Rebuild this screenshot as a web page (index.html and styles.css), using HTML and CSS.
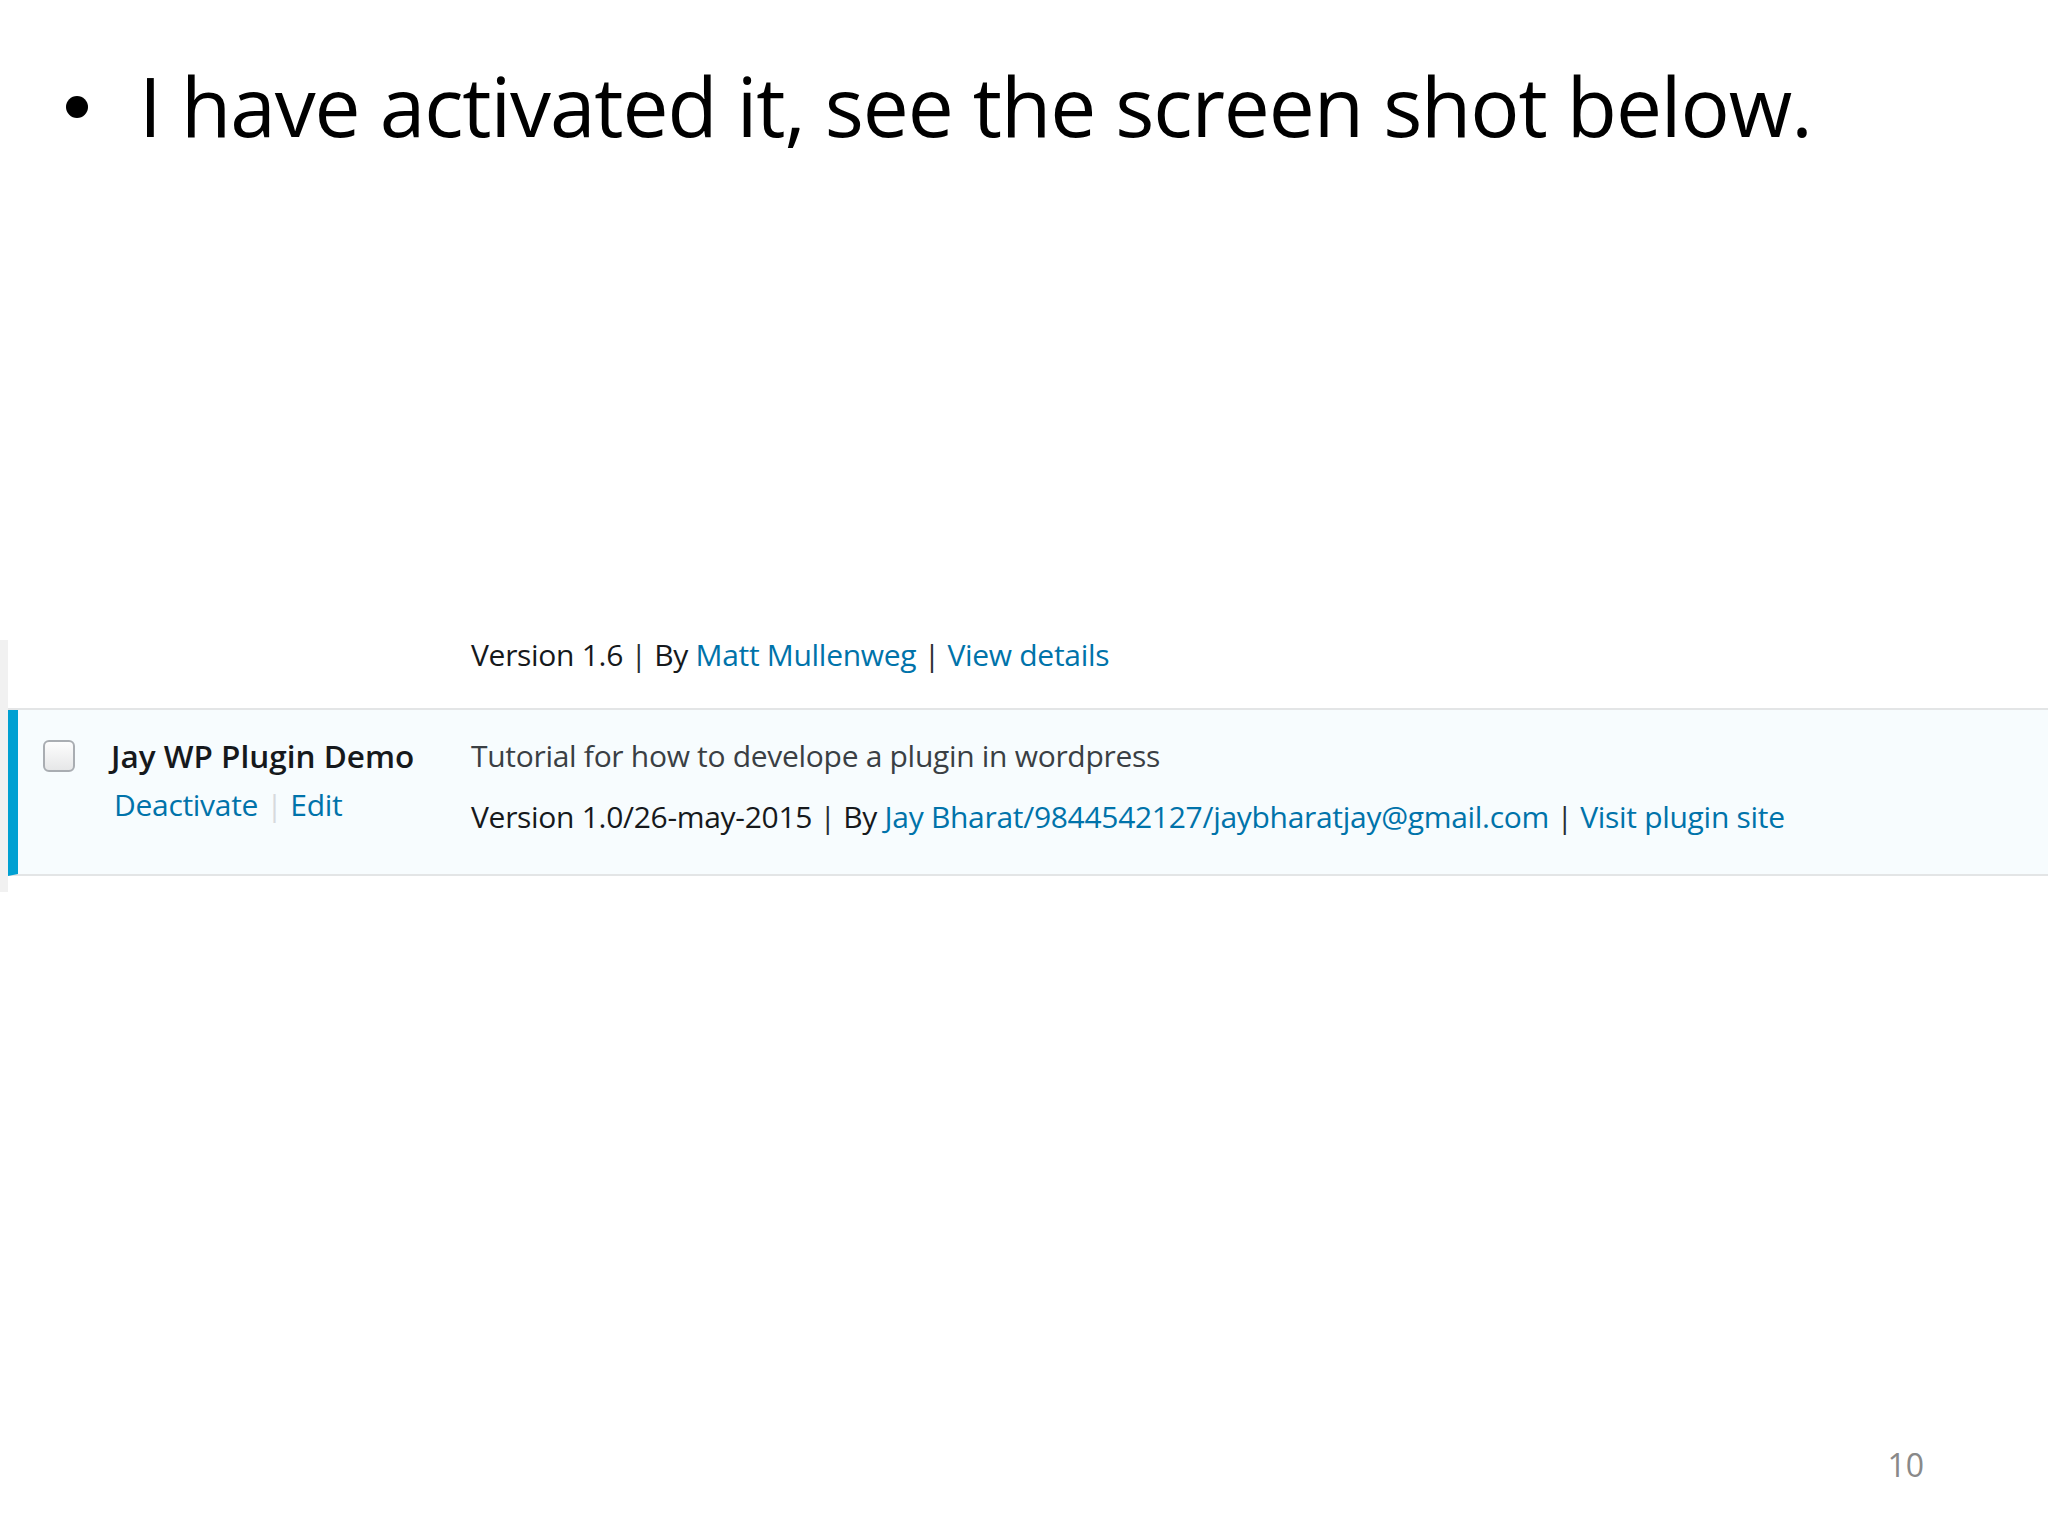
FILE: index.html
```html
<!DOCTYPE html>
<html lang="en">
<head>
<meta charset="utf-8">
<title>Slide 10</title>
<link rel="stylesheet" href="styles.css">
</head>
<body>
<div class="slide">
  <div class="bullet-line">
    <span class="dot"></span>
    <span class="title">I have activated it, see the screen shot below.</span>
  </div>

  <div class="shot">
    <div class="row-inactive">
      <div class="col-desc">
        <span class="meta">Version 1.6 <span class="sep">|</span> By <a class="link">Matt Mullenweg</a> <span class="sep">|</span> <a class="link">View details</a></span>
      </div>
    </div>
    <div class="row-active">
      <div class="col-check"><span class="checkbox"></span></div>
      <div class="col-name">
        <div class="plugin-name">Jay WP Plugin Demo</div>
        <div class="actions"><a class="link">Deactivate</a><span class="asep">|</span><a class="link">Edit</a></div>
      </div>
      <div class="col-desc">
        <div class="desc">Tutorial for how to develope a plugin in wordpress</div>
        <div class="meta meta-gap">Version 1.0/26-may-2015 <span class="sep">|</span> By <a class="link">Jay Bharat/9844542127/jaybharatjay@gmail.com</a> <span class="sep">|</span> <a class="link">Visit plugin site</a></div>
      </div>
    </div>
    <div class="row-tail"></div>
  </div>

  <div class="footer">10</div>
</div>
</body>
</html>
```
FILE: styles.css
```css
html, body {
  margin: 0;
  padding: 0;
  background: #ffffff;
}

.slide {
  width: 2048px;
  min-height: 1536px;
  display: flex;
  flex-direction: column;
  font-family: "Open Sans", "Noto Sans", sans-serif;
}

.bullet-line {
  display: flex;
  align-items: flex-start;
  padding: 64px 0 0 66px;
}

.dot {
  width: 22px;
  height: 22px;
  border-radius: 50%;
  background: #000;
  margin-top: 32px;
  margin-right: 51px;
  flex: none;
}

.title {
  font-size: 82px;
  line-height: 82px;
  letter-spacing: -1.1px;
  color: #000;
  white-space: nowrap;
}

.shot {
  margin-top: 494px;
  border-left: 8px solid #f1f1f1;
  font-size: 30px;
  line-height: 30px;
  letter-spacing: -0.3px;
  color: #32373c;
}

.row-inactive {
  display: flex;
  height: 70px;
  border-bottom: 2px solid #e3e5e6;
  box-sizing: border-box;
}

.row-inactive .col-desc {
  padding-left: 463px;
}

.row-active {
  display: flex;
  background: #f7fcfe;
  border-left: 10px solid #00a0d2;
  border-bottom: 2px solid #e3e5e6;
  padding: 31px 0 42px 0;
}

.col-check {
  width: 93px;
  padding-left: 25px;
  box-sizing: border-box;
  flex: none;
}

.checkbox {
  display: block;
  width: 28px;
  height: 28px;
  border: 2px solid #a9adb2;
  border-radius: 6px;
  background: linear-gradient(#fdfdfd, #e6e7e8);
  margin-top: -1px;
}

.col-name {
  width: 360px;
  flex: none;
}

.plugin-name {
  font-weight: 600;
  font-size: 31.5px;
  color: #16191c;
  letter-spacing: 0;
}

.actions {
  margin-top: 19px;
  padding-left: 3px;
}

.asep {
  color: #d7dadd;
  margin: 0 8px;
}

.link {
  color: #0073aa;
  text-decoration: none;
}

.desc {
  color: #3a3f44;
}

.meta {
  color: #16191c;
}

.meta-gap {
  margin-top: 31px;
}

.sep {
  color: #2b2f33;
}

.row-tail {
  height: 16px;
}

.footer {
  margin-top: auto;
  text-align: right;
  padding: 0 124px 51px 0;
  font-size: 32px;
  line-height: 40px;
  color: #898989;
}
```
